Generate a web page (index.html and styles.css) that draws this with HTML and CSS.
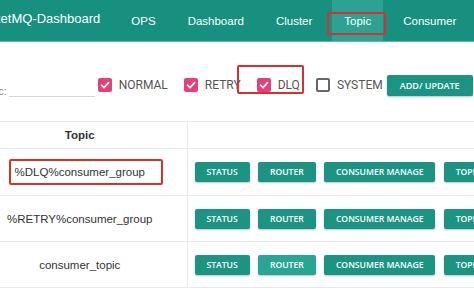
FILE: index.html
```html
<!DOCTYPE html>
<html lang="en">
  <head>
    <meta charset="UTF-8" />
    <meta name="viewport" content="width=device-width, initial-scale=1.0" />
    <title>RocketMQ-Dashboard - Topic</title>
    <link rel="stylesheet" href="styles.css">
  </head>
  <body>
    <div class="page">
      <header class="navbar">
        <span class="brand">RocketMQ-Dashboard</span>
        <nav class="nav">
          <a class="nav-item">OPS</a>
          <a class="nav-item">Dashboard</a>
          <a class="nav-item">Cluster</a>
          <a class="nav-item active">Topic<span class="mark mark-nav"></span></a>
          <a class="nav-item">Consumer</a>
        </nav>
      </header>

      <section class="filters">
        <label class="topic-filter">Topic:<input type="text" aria-label="Topic filter" /></label>

        <label class="check">
          <span class="box checked">
            <svg viewBox="0 0 14 14" width="14" height="14"><polyline points="3.5,7.2 6,9.6 10.6,4.6" /></svg>
          </span>
          NORMAL
        </label>
        <label class="check">
          <span class="box checked">
            <svg viewBox="0 0 14 14" width="14" height="14"><polyline points="3.5,7.2 6,9.6 10.6,4.6" /></svg>
          </span>
          RETRY
        </label>
        <label class="check">
          <span class="box checked">
            <svg viewBox="0 0 14 14" width="14" height="14"><polyline points="3.5,7.2 6,9.6 10.6,4.6" /></svg>
          </span>
          DLQ
          <span class="mark mark-dlq"></span>
        </label>
        <label class="check">
          <span class="box"></span>
          SYSTEM
        </label>

        <button class="btn btn-add">ADD/ UPDATE</button>
      </section>

      <table class="topic-table">
        <thead>
          <tr>
            <th class="col-topic">Topic</th>
            <th></th>
          </tr>
        </thead>
        <tbody>
          <tr>
            <td class="col-topic">
              <span class="topic-name">%DLQ%consumer_group<span class="mark mark-cell"></span></span>
            </td>
            <td class="actions">
              <button class="btn">STATUS</button>
              <button class="btn">ROUTER</button>
              <button class="btn">CONSUMER MANAGE</button>
              <button class="btn">TOPIC CONFIG</button>
            </td>
          </tr>
          <tr>
            <td class="col-topic">%RETRY%consumer_group</td>
            <td class="actions">
              <button class="btn">STATUS</button>
              <button class="btn">ROUTER</button>
              <button class="btn">CONSUMER MANAGE</button>
              <button class="btn">TOPIC CONFIG</button>
            </td>
          </tr>
          <tr>
            <td class="col-topic">consumer_topic</td>
            <td class="actions">
              <button class="btn">STATUS</button>
              <button class="btn hover">ROUTER</button>
              <button class="btn">CONSUMER MANAGE</button>
              <button class="btn">TOPIC CONFIG</button>
            </td>
          </tr>
        </tbody>
      </table>
    </div>
  </body>
</html>
```

FILE: styles.css
```css
:root {
  --teal: #17907f;
  --teal-light: #2ba294;
  --btn: #1c9483;
  --btn-hover: #27a695;
  --pink: #e3417b;
  --mark: #d8302a;
  --line: #e9e9e9;
  --text: #333;
  --label: #555;
}

* {
  margin: 0;
  padding: 0;
  box-sizing: border-box;
}

body {
  background: #fff;
  font-family: "Liberation Sans", Arial, sans-serif;
  color: var(--text);
  overflow: hidden;
}

.page {
  width: 760px;
  margin-left: -27px;
}

/* top bar */
.navbar {
  height: 41px;
  background: var(--teal);
  display: flex;
  align-items: stretch;
  box-shadow: 0 1px 0 #5fb8ad;
}

.brand {
  margin-left: -2px;
  margin-right: 19px;
  color: #fff;
  font-size: 13px;
  display: flex;
  align-items: center;
  padding-bottom: 4px;
}

.nav {
  display: flex;
  gap: 8px;
}

.nav-item {
  position: relative;
  display: flex;
  align-items: center;
  padding: 0 12px;
  color: #fff;
  font-size: 11.5px;
  text-decoration: none;
}

.nav-item.active {
  background: var(--teal-light);
}

/* red annotation boxes */
.mark {
  position: absolute;
  border: 2px solid var(--mark);
  border-radius: 2px;
  pointer-events: none;
}

.mark-nav {
  left: -5px;
  right: -3px;
  top: 12px;
  bottom: 6px;
}

.mark-dlq {
  left: -20px;
  right: -4px;
  top: -13px;
  bottom: -2px;
}

.mark-cell {
  left: -6px;
  right: -18px;
  top: -7px;
  bottom: -7px;
}

/* filter row */
.filters {
  display: flex;
  align-items: center;
  height: 24px;
  margin-top: 32px;
  margin-left: 5px;
}

.topic-filter {
  align-self: flex-end;
  display: flex;
  align-items: flex-end;
  gap: 2px;
  font-size: 11px;
  color: #888;
}

.topic-filter input {
  width: 86px;
  height: 20px;
  border: none;
  border-bottom: 1px solid #d6d6d6;
  outline: none;
  background: transparent;
}

.check {
  position: relative;
  display: flex;
  align-items: center;
  gap: 7px;
  margin-left: 16px;
  font-family: Roboto, "Liberation Sans", sans-serif;
  font-size: 12px;
  color: var(--label);
}

.topic-filter + .check {
  margin-left: 3px;
}

.box {
  width: 14px;
  height: 14px;
  border: 2px solid #666;
  border-radius: 2px;
  display: flex;
}

.box.checked {
  background: var(--pink);
  border-color: var(--pink);
  border-width: 0;
}

.box svg polyline {
  fill: none;
  stroke: #fff;
  stroke-width: 1.6;
  stroke-linecap: round;
  stroke-linejoin: round;
}

/* buttons */
.btn {
  display: inline-flex;
  align-items: center;
  justify-content: center;
  height: 20px;
  padding: 0 12px;
  border: none;
  border-radius: 2px;
  background: var(--btn);
  color: #fff;
  font-family: "Open Sans", sans-serif;
  font-size: 8.6px;
  font-weight: 600;
  white-space: nowrap;
  box-shadow: 0 1px 2px rgba(0, 0, 0, 0.25);
  cursor: pointer;
}

.btn.hover {
  background: var(--btn-hover);
}

.btn-add {
  margin-left: 4px;
  width: 86px;
  height: 21px;
  padding: 0;
  font-size: 9px;
}

/* table */
.topic-table {
  width: 730px;
  margin-top: 24px;
  border-collapse: collapse;
  font-size: 11.5px;
}

.topic-table th {
  height: 27px;
  font-weight: 700;
  border-top: 1px solid var(--line);
  border-bottom: 1px solid var(--line);
}

.topic-table td {
  height: 46px;
  border-bottom: 1px solid var(--line);
  vertical-align: middle;
}

.col-topic {
  width: 214px;
  text-align: center;
  border-right: 1px solid var(--line);
}

.topic-name {
  position: relative;
  display: inline-block;
}

.actions {
  padding-left: 7px;
  white-space: nowrap;
}

.actions .btn + .btn {
  margin-left: 5px;
}

.topic-table tbody tr:first-child td {
  height: 47px;
}
```
